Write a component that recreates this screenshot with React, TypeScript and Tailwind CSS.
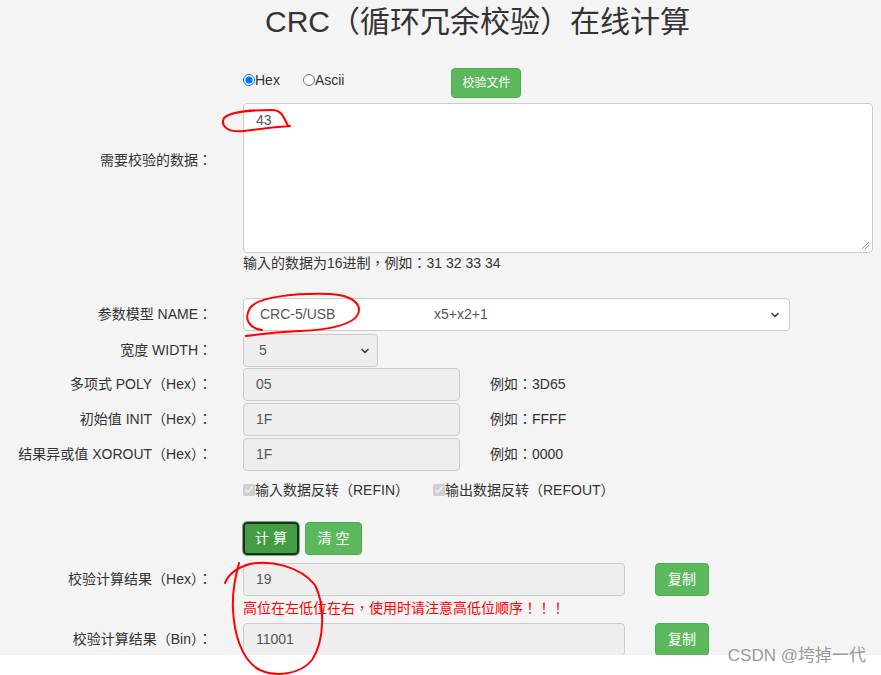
import { ChevronDown } from "lucide-react";

const font = { fontFamily: '"Liberation Sans", "Noto Sans CJK TC", sans-serif' };

function Label({ text, top = false }: { text: string; top?: boolean }) {
    return <div className={`w-[212px] shrink-0 text-right text-[14px] text-[#333] ${top ? "self-start mt-[47px]" : ""}`}>{text}</div>;
}

function Row({ label, children, className = "", top = false }: { label?: string; children: React.ReactNode; className?: string; top?: boolean }) {
    return (
        <div className={`flex items-center ${className}`}>
            <Label text={label ?? ""} top={top} />
            <div className="ml-[31px] flex items-center">{children}</div>
        </div>
    );
}

function Field({ value, w }: { value: string; w: string }) {
    return (
        <div className={`${w} h-[33px] flex items-center px-[12px] bg-[#eeeeee] border border-[#cccccc] rounded-[4px] text-[14px] text-[#555]`}>
            {value}
        </div>
    );
}

function GreenBtn({ text, className = "" }: { text: string; className?: string }) {
    return (
        <button className={`flex items-center justify-center bg-[#5cb85c] border border-[#4cae4c] rounded-[4px] text-white ${className}`}>
            {text}
        </button>
    );
}

function Marks() {
    return (
        <svg className="absolute left-0 top-0 pointer-events-none" width="881" height="675" fill="none" stroke="#ff0000" strokeWidth="2" strokeLinecap="round">
            <path d="M 288 126 C 284 118, 282 110, 272 110 C 258 110, 232 110, 224 118 C 220 126, 228 133, 244 131 C 258 129, 276 127, 290 126" />
            <path d="M 262 330 C 248 328, 244 318, 250 308 C 258 296, 300 293, 330 294 C 352 295, 362 304, 358 314 C 354 324, 330 330, 300 331 C 280 332, 260 334, 246 336" />
            <path d="M 225 583 C 228 575, 236 568, 250 564 C 270 560, 300 566, 315 585 C 325 605, 325 640, 312 660 C 300 675, 275 677, 260 670 C 240 660, 234 630, 233 610 C 232 590, 236 575, 239 563" />
        </svg>
    );
}

export default function App() {
    return (
        <div className="relative w-[881px] h-[675px] bg-white overflow-hidden" style={font}>
            <div className="h-[655px] bg-[#f4f4f4] overflow-hidden">
                <div className="h-[68px] pt-[4px]">
                    <h1 className="pl-[265px] text-[30px] leading-[36px] text-[#333] whitespace-nowrap">CRC（循环冗余校验）在线计算</h1>
                </div>

                <Row className="h-[30px]">
                    <label className="flex items-center -mt-[6px] text-[14px] text-[#333]">
                        <input type="radio" name="fmt" defaultChecked className="m-0 w-[12px] h-[12px]" />
                        <span>Hex</span>
                    </label>
                    <label className="flex items-center -mt-[6px] ml-[23px] text-[14px] text-[#333]">
                        <input type="radio" name="fmt" className="m-0 w-[12px] h-[12px]" />
                        <span>Ascii</span>
                    </label>
                    <GreenBtn text="校验文件" className="ml-[107px] w-[70px] h-[30px] text-[12px]" />
                </Row>

                <Row label="需要校验的数据：" top className="mt-[5px] h-[150px]">
                    <div className="relative w-[630px] h-[150px] bg-white border border-[#cccccc] rounded-[4px] px-[12px] pt-[6px] text-[14px] text-[#555]">
                        43
                        <svg className="absolute right-[2px] bottom-[2px]" width="9" height="9" stroke="#999" strokeWidth="1">
                            <line x1="1" y1="8" x2="8" y2="1" />
                            <line x1="4" y1="8" x2="8" y2="4" />
                        </svg>
                    </div>
                </Row>
                <Row className="h-[20px]">
                    <span className="text-[14px] text-[#333] whitespace-nowrap">输入的数据为16进制，例如：31 32 33 34</span>
                </Row>

                <Row label="参数模型 NAME：" className="mt-[25px] h-[33px]">
                    <div className="w-[547px] h-[33px] flex items-center pl-[16px] pr-[8px] bg-white border border-[#cccccc] rounded-[4px] text-[14px] text-[#555]">
                        <span className="w-[174px]">CRC-5/USB</span>
                        <span className="flex-1">x5+x2+1</span>
                        <ChevronDown size={12} strokeWidth={3.5} className="text-[#444]" />
                    </div>
                </Row>
                <Row label="宽度 WIDTH：" className="mt-[3px] h-[33px]">
                    <div className="w-[135px] h-[33px] flex items-center pl-[15px] pr-[6px] bg-[#eeeeee] border border-[#cccccc] rounded-[4px] text-[14px] text-[#555]">
                        <span className="flex-1">5</span>
                        <ChevronDown size={12} strokeWidth={3.5} className="text-[#444]" />
                    </div>
                </Row>
                <Row label="多项式 POLY（Hex）：" className="mt-[1px] h-[33px]">
                    <Field value="05" w="w-[217px]" />
                    <span className="ml-[30px] text-[14px] text-[#333]">例如：3D65</span>
                </Row>
                <Row label="初始值 INIT（Hex）：" className="mt-[2px] h-[33px]">
                    <Field value="1F" w="w-[217px]" />
                    <span className="ml-[30px] text-[14px] text-[#333]">例如：FFFF</span>
                </Row>
                <Row label="结果异或值 XOROUT（Hex）：" className="mt-[2px] h-[33px]">
                    <Field value="1F" w="w-[217px]" />
                    <span className="ml-[30px] text-[14px] text-[#333]">例如：0000</span>
                </Row>

                <Row className="mt-[9px] h-[20px]">
                    <label className="flex items-center w-[190px] text-[14px] text-[#333]">
                        <input type="checkbox" defaultChecked disabled className="m-0 w-[12px] h-[12px]" />
                        <span>输入数据反转（REFIN）</span>
                    </label>
                    <label className="flex items-center text-[14px] text-[#333]">
                        <input type="checkbox" defaultChecked disabled className="m-0 w-[12px] h-[12px]" />
                        <span>输出数据反转（REFOUT）</span>
                    </label>
                </Row>

                <Row className="mt-[22px] h-[33px]">
                    <button className="w-[56px] h-[33px] flex items-center justify-center bg-[#449d44] border-2 border-[#1a331a] outline outline-1 outline-[#7aa87a] rounded-[4px] text-white text-[14px] tracking-[4px] pl-[4px]">
                        计算
                    </button>
                    <GreenBtn text="清空" className="ml-[6px] w-[57px] h-[33px] text-[14px] tracking-[4px] pl-[4px]" />
                </Row>

                <Row label="校验计算结果（Hex）：" className="mt-[8px] h-[33px]">
                    <Field value="19" w="w-[382px]" />
                    <GreenBtn text="复制" className="ml-[30px] w-[54px] h-[33px] text-[14px]" />
                </Row>
                <Row className="mt-[2px] h-[20px]">
                    <span className="text-[14px] text-[#ff0000] whitespace-nowrap">高位在左低位在右，使用时请注意高低位顺序！！！</span>
                </Row>
                <Row label="校验计算结果（Bin）：" className="mt-[5px] h-[33px]">
                    <Field value="11001" w="w-[382px]" />
                    <GreenBtn text="复制" className="ml-[30px] w-[54px] h-[33px] text-[14px]" />
                </Row>
            </div>

            <Marks />
            <div className="absolute right-[15px] bottom-[7px] text-[17px] text-[#999] [text-shadow:0_0_2px_#fff]">CSDN @垮掉一代</div>
        </div>
    );
}
